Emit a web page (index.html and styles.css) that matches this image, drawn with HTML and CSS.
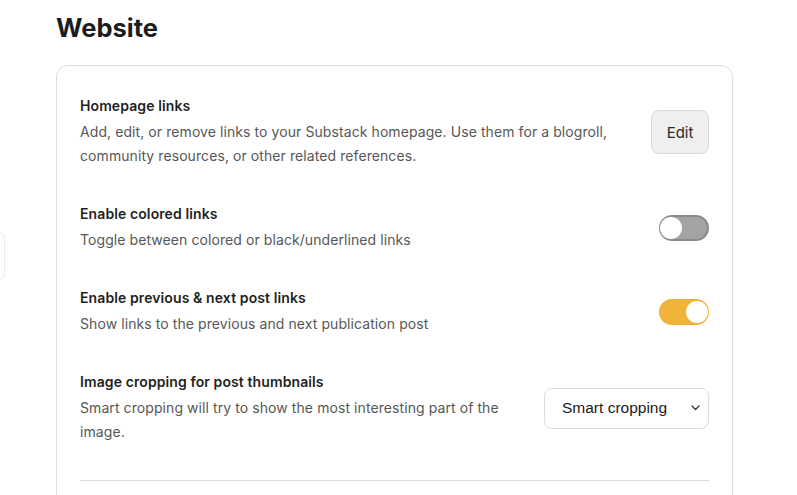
FILE: index.html
```html
<!DOCTYPE html>
<html lang="en">
<head>
<meta charset="utf-8">
<title>Website settings</title>
<link rel="stylesheet" href="styles.css">
</head>
<body>
<div class="edge-tab"></div>
<main class="page">
  <h1 class="page-title">Website</h1>
  <section class="card">
    <div class="row">
      <div class="row-text">
        <div class="row-title">Homepage links</div>
        <p class="row-desc">Add, edit, or remove links to your Substack homepage. Use them for a blogroll, community resources, or other related references.</p>
      </div>
      <button class="btn">Edit</button>
    </div>
    <div class="row">
      <div class="row-text">
        <div class="row-title">Enable colored links</div>
        <p class="row-desc">Toggle between colored or black/underlined links</p>
      </div>
      <span class="toggle"><span class="knob"></span></span>
    </div>
    <div class="row">
      <div class="row-text">
        <div class="row-title">Enable previous &amp; next post links</div>
        <p class="row-desc">Show links to the previous and next publication post</p>
      </div>
      <span class="toggle on"><span class="knob"></span></span>
    </div>
    <div class="row">
      <div class="row-text">
        <div class="row-title">Image cropping for post thumbnails</div>
        <p class="row-desc">Smart cropping will try to show the most interesting part of the image.</p>
      </div>
      <div class="select">
        <span>Smart cropping</span>
        <svg class="chev" width="9" height="6" viewBox="0 0 9 6"><path d="M1 1l3.5 3.5L8 1" fill="none" stroke="#333" stroke-width="1.3" stroke-linecap="round" stroke-linejoin="round"/></svg>
      </div>
    </div>
    <hr class="divider">
  </section>
</main>
</body>
</html>
```
FILE: styles.css
```css
html, body {
  margin: 0;
  padding: 0;
  background: #fff;
}
body {
  font-family: Inter, "Noto Sans", sans-serif;
  color: #1f1f1f;
  -webkit-font-smoothing: antialiased;
}
.edge-tab {
  position: absolute;
  left: -8px;
  top: 233px;
  width: 11px;
  height: 44px;
  border: 1px solid #ececec;
  border-radius: 4px;
  background: #fff;
}
.page {
  padding: 11px 64px 0 56px;
}
.page-title {
  margin: 0 0 20px;
  font-size: 25.5px;
  line-height: 34px;
  font-weight: 700;
  letter-spacing: 0;
  color: #1c1c1c;
}
.card {
  border: 1px solid #dedede;
  border-radius: 12px;
  padding: 30px 23px 40px;
  display: flex;
  flex-direction: column;
  gap: 36px;
}
.row {
  display: flex;
  align-items: center;
  gap: 24px;
}
.row-text {
  flex: 1;
  min-width: 0;
}
.row-title {
  font-size: 14px;
  line-height: 20px;
  font-weight: 600;
  letter-spacing: 0.1px;
  color: #1f1f1f;
  margin-bottom: 4px;
}
.row-desc {
  margin: 0;
  font-size: 14px;
  line-height: 24px;
  letter-spacing: 0.08px;
  color: #575757;
}
.btn {
  font-family: inherit;
  font-size: 15px;
  color: #2a2a2a;
  background: #efefef;
  border: 1px solid #d8d8d8;
  border-radius: 8px;
  width: 58px;
  height: 44px;
  padding: 0;
  flex: none;
}
.toggle {
  flex: none;
  width: 50px;
  height: 26px;
  border-radius: 13px;
  background: #a3a3a3;
  box-sizing: border-box;
  border: 2px solid #8a8a8a;
  display: flex;
  align-items: center;
  justify-content: flex-start;
}
.toggle .knob {
  width: 22px;
  height: 22px;
  border-radius: 50%;
  background: #fff;
  box-sizing: border-box;
  margin-left: -1px;
}
.toggle.on {
  background: #f0b43a;
  border-color: #eeb135;
  justify-content: flex-end;
}
.toggle.on .knob {
  margin-left: 0;
  margin-right: -1px;
}
.select {
  flex: none;
  width: 165px;
  height: 41px;
  box-sizing: border-box;
  border: 1px solid #dcdcdc;
  border-radius: 8px;
  display: flex;
  align-items: center;
  justify-content: space-between;
  padding: 0 8px 0 17px;
  font-family: "Liberation Sans", Arial, sans-serif;
  font-size: 15.5px;
  color: #1a1a1a;
}
.chev {
  display: block;
}
.divider {
  margin: 0;
  border: 0;
  border-top: 1px solid #dcdcdc;
}
```
